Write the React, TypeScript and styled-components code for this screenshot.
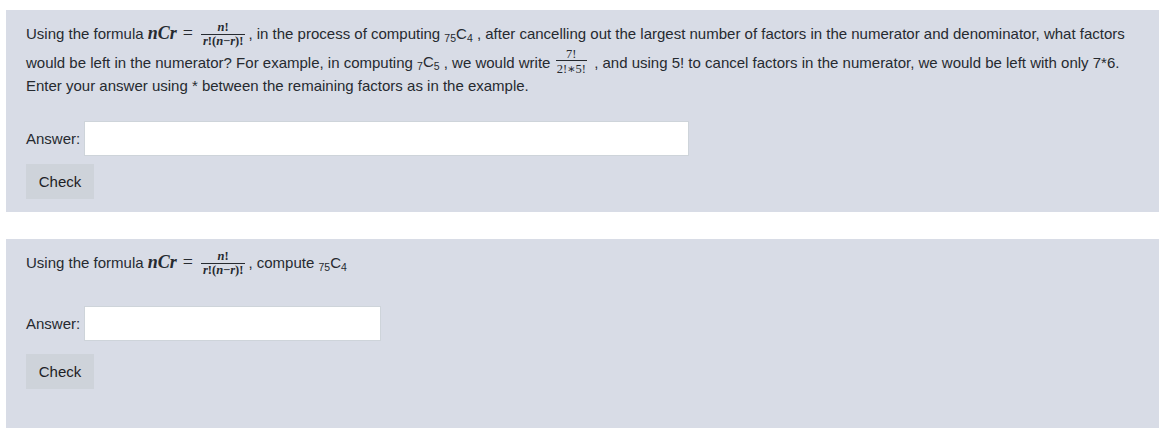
import React from "react";
import styled, { createGlobalStyle } from "styled-components";

const Global = createGlobalStyle`
  html, body { margin: 0; padding: 0; background: #ffffff; }
  body {
    font-family: "Liberation Sans", Arial, sans-serif;
    font-size: 15px;
    color: #262a30;
  }
`;

const Page = styled.div`
  display: flex;
  flex-direction: column;
  gap: 27px;
  padding: 10px 10px 10px 6px;
`;

const Panel = styled.section<{ $padBottom: number }>`
  background: #d8dce6;
  padding: 11px 20px ${(p) => p.$padBottom}px;
  display: flex;
  flex-direction: column;
`;

const QText = styled.div<{ $gap: number }>`
  line-height: 22.5px;
  margin-bottom: ${(p) => p.$gap}px;
`;

const MathRun = styled.span`
  font-family: "Liberation Serif", "Times New Roman", serif;
  white-space: nowrap;
`;

const MVar = styled.span<{ $size?: number }>`
  font-style: italic;
  font-weight: bold;
  font-size: ${(p) => p.$size ?? 18}px;
  line-height: 12px;
`;

const Eq = styled.span`
  font-size: 18px;
  line-height: 12px;
  margin: 0 7px 0 6px;
`;

const Frac = styled.span<{ $bold?: boolean; $lift: number }>`
  display: inline-flex;
  flex-direction: column;
  align-items: center;
  vertical-align: ${(p) => p.$lift}px;
  font-family: "Liberation Serif", "DejaVu Serif", serif;
  font-size: 12.5px;
  line-height: 12.5px;
  margin: 0 3px 0 1px;
  font-weight: ${(p) => (p.$bold ? "bold" : "normal")};
`;

const Num = styled.span<{ $pad: number }>`
  padding: 0 ${(p) => p.$pad}px;
`;

const Bar = styled.span`
  align-self: stretch;
  height: 1px;
  background: #262a30;
`;

const Den = styled.span<{ $gap: number; $pad: number }>`
  padding: 0 ${(p) => p.$pad}px;
  margin-top: ${(p) => p.$gap}px;
`;

const Sub = styled.span`
  font-size: 10.5px;
  vertical-align: -3px;
  line-height: 0;
`;

const AnswerRow = styled.div`
  display: flex;
  align-items: center;
  gap: 4px;
  height: 35px;
`;

const Label = styled.label`
  font-size: 15px;
`;

const Input = styled.input<{ $w: number }>`
  width: ${(p) => p.$w}px;
  height: 35px;
  box-sizing: border-box;
  border: 1px solid #ced4da;
  border-radius: 0;
  background: #ffffff;
  padding: 6px 12px;
  font: inherit;
  outline: none;
`;

const CheckButton = styled.button<{ $gap: number }>`
  margin-top: ${(p) => p.$gap}px;
  align-self: flex-start;
  width: 68px;
  height: 35px;
  border: none;
  border-radius: 0;
  background: #ced3da;
  color: #1d2125;
  font-family: "Liberation Sans", Arial, sans-serif;
  font-size: 15px;
  padding: 0;
  cursor: pointer;
`;

const Formula = () => (
  <MathRun>
    <MVar>nCr</MVar>
    <Eq>=</Eq>
    <Frac $bold $lift={8}>
      <Num $pad={2}>
        <MVar $size={12.5}>n</MVar>!
      </Num>
      <Bar />
      <Den $gap={0.5} $pad={2}>
        <MVar $size={12.5}>r</MVar>!(<MVar $size={12.5}>n</MVar>−
        <MVar $size={12.5}>r</MVar>)!
      </Den>
    </Frac>
  </MathRun>
);

const Combo = ({ n, r }: { n: string; r: string }) => (
  <span>
    <Sub>{n}</Sub>C<Sub>{r}</Sub>
  </span>
);

export default function App() {
  return (
    <>
      <Global />
      <Page>
        <Panel $padBottom={13}>
          <QText $gap={23}>
            Using the formula <Formula />, in the process of computing{" "}
            <Combo n="75" r="4" /> , after cancelling out the largest number of
            factors in the numerator and denominator, what factors would be left
            in the numerator? For example, in computing <Combo n="7" r="5" /> ,
            we would write{" "}
            <Frac $lift={9.5}>
              <Num $pad={1}>7!</Num>
              <Bar />
              <Den $gap={1.5} $pad={1}>
                2!∗5!
              </Den>
            </Frac>{" "}
            , and using 5! to cancel factors in the numerator, we would be left
            with only 7*6. Enter your answer using * between the remaining
            factors as in the example.
          </QText>
          <AnswerRow>
            <Label htmlFor="a1">Answer:</Label>
            <Input id="a1" type="text" $w={605} />
          </AnswerRow>
          <CheckButton type="button" $gap={8.5}>
            Check
          </CheckButton>
        </Panel>
        <Panel $padBottom={39.5}>
          <QText $gap={29}>
            Using the formula <Formula />, compute <Combo n="75" r="4" />
          </QText>
          <AnswerRow>
            <Label htmlFor="a2">Answer:</Label>
            <Input id="a2" type="text" $w={297} />
          </AnswerRow>
          <CheckButton type="button" $gap={13}>
            Check
          </CheckButton>
        </Panel>
      </Page>
    </>
  );
}
